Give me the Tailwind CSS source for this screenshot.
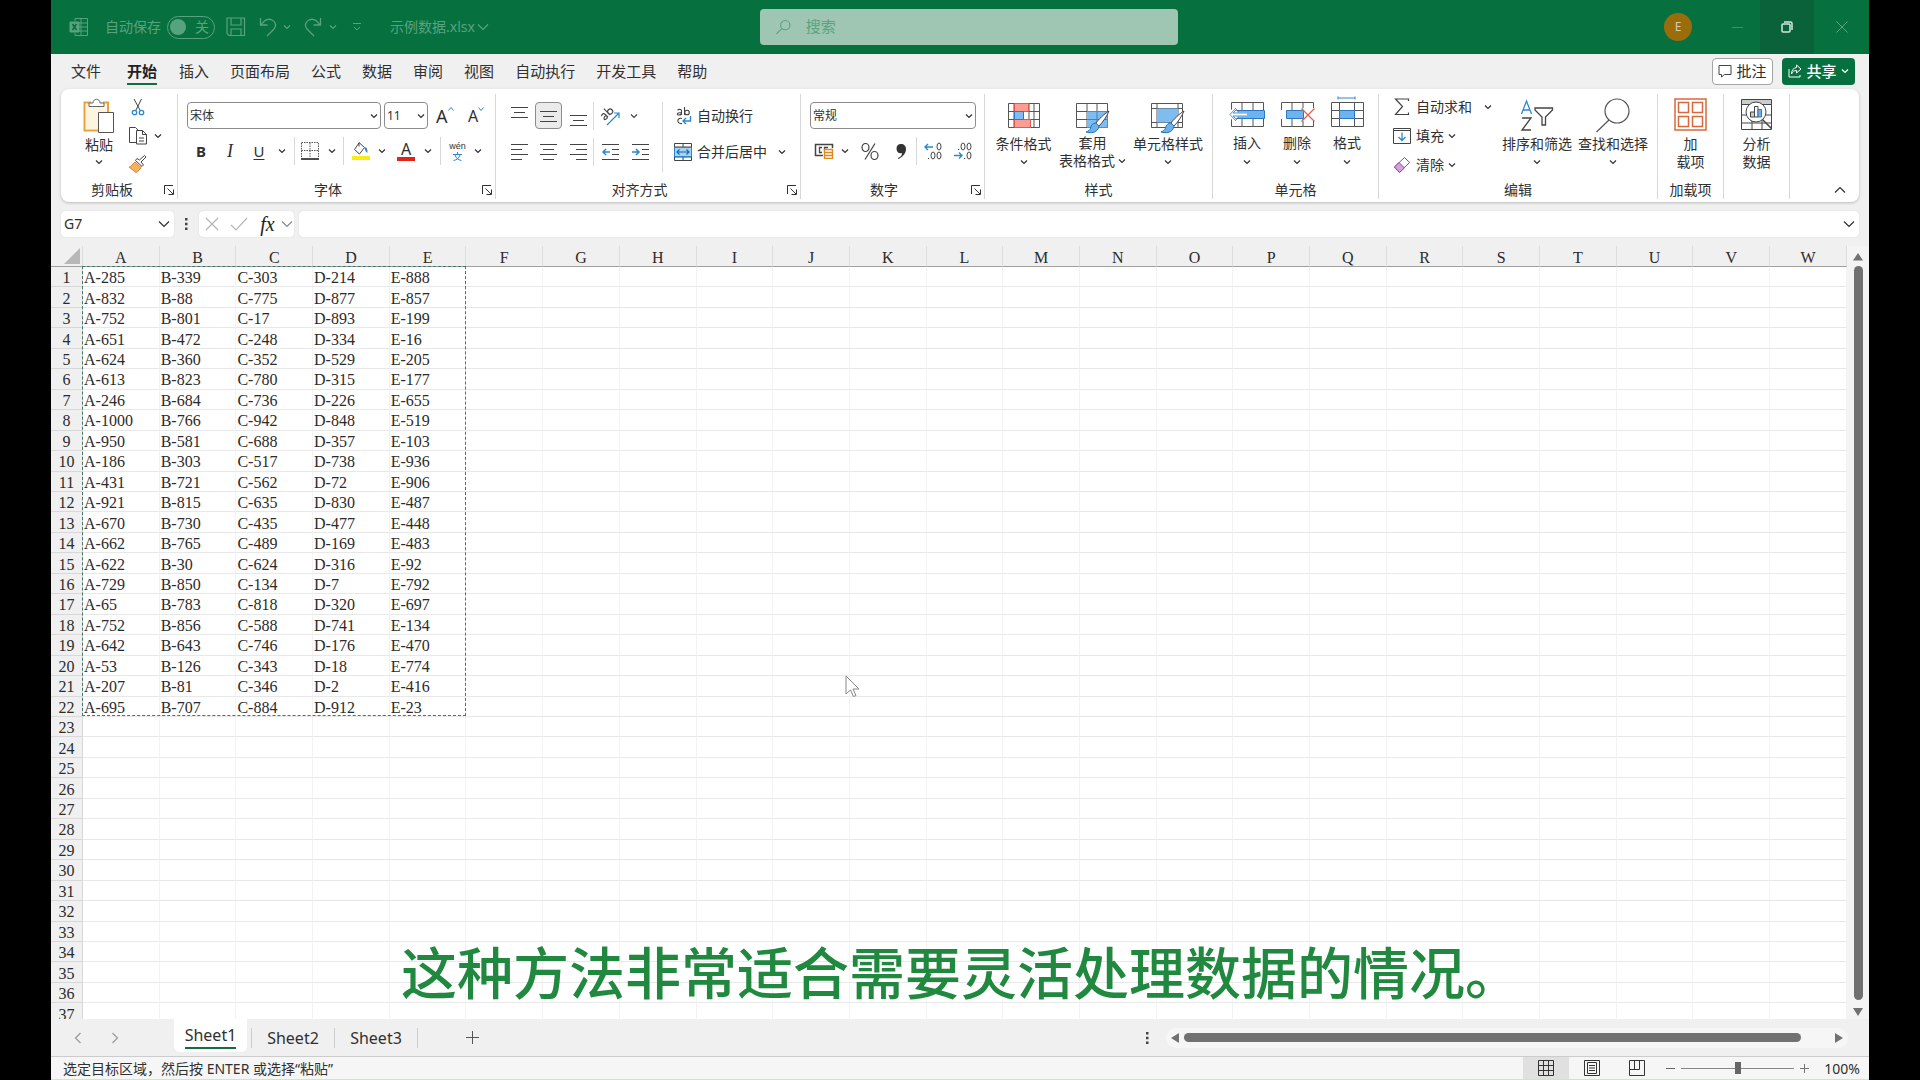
<!DOCTYPE html>
<html lang="zh-CN">
<head>
<meta charset="utf-8">
<title>示例数据.xlsx</title>
<script src="https://cdn.jsdelivr.net/npm/@tailwindcss/browser@4"></script>
</head>
<body class="h-screen overflow-hidden bg-black px-[51px] font-['Noto_Sans','Noto_Sans_CJK_SC',sans-serif] text-sm text-[#303030]">
<svg class="hidden">
  <symbol id="chev" viewBox="0 0 8 8"><path d="M1 2.500l3 3 3-3" fill="none" stroke="currentColor" stroke-width="1.200"/></symbol>
  <symbol id="chevl" viewBox="0 0 12 12"><path d="M1 3.500l5 5 5-5" fill="none" stroke="currentColor" stroke-width="1.200"/></symbol>
  <symbol id="launch" viewBox="0 0 10 10"><path d="M.5 9V.5H9M3.500 3.500l5.500 5.500M9.500 4.500v5h-5" fill="none" stroke="currentColor"/></symbol>
  <symbol id="brush" viewBox="0 0 26 24"><path d="M25 1C20 4 14 10 12 13l3 3C19 12 23 6 25 1z" fill="#fff" stroke="#444"/><path d="M12 13c-3 0-5 2-5.500 5-.5 2-2 3-4.500 4 5 1.500 12 1 13-6z" fill="#6fb1e6" stroke="#1f78c4"/></symbol>
</svg>
<div class="flex h-full flex-col bg-[#f0f0f0]">

  <!-- Title bar -->
  <header class="flex h-[54px] shrink-0 items-center bg-[#06703f] text-[#58a37f]">
    <div class="flex flex-1 items-center pl-[18px]">
      <svg class="size-5" viewBox="0 0 20 20" fill="none" stroke="currentColor"><path d="M6 4V1.500h12.500v17H6V16M12 1.500v17M6 6h12.500M6 10h12.500M6 14h12.500"/><path d="M1 5h9v10H1z" fill="currentColor"/><path d="M3.500 7l4 6M7.500 7l-4 6" stroke="#06703f" stroke-width="1.600"/></svg>
      <label for="autosave" class="ml-4 w-14 whitespace-nowrap">自动保存</label>
      <button id="autosave" role="switch" aria-checked="false" class="ml-[6px] flex h-[23px] w-12 items-center justify-between rounded-full border border-[#58a37f] pr-[5px] pl-[2px] text-sm leading-5"><span class="size-4 rounded-full bg-[#58a37f]"></span>关</button>
      <button aria-label="保存" class="ml-[11px]"><svg class="size-5" viewBox="0 0 20 20" fill="none" stroke="currentColor" stroke-width="1.200"><path d="M1 1h17.500v17.500H3L1 16.500zM5 1v7h10V1M5 18.500V12h10v6.500"/></svg></button>
      <button aria-label="撤消" class="ml-[13px]"><svg class="size-5" viewBox="0 0 20 20" fill="none" stroke="currentColor" stroke-width="1.300"><path d="M1.500 1v7h7M2 8c4-6 8-6.500 11-5 4 2 4.500 6 2 9l-7 7"/></svg></button>
      <svg class="ml-[4px] size-2"><use href="#chev"/></svg>
      <button aria-label="恢复" class="ml-3"><svg class="size-5" viewBox="0 0 20 20" fill="none" stroke="currentColor" stroke-width="1.300"><path d="M17.500 1v7h-7M17 8c-4-6-8-6.500-11-5-4 2-4.500 6-2 9l7 7"/></svg></button>
      <svg class="ml-[6px] size-2"><use href="#chev"/></svg>
      <svg class="ml-[15px] size-[10px]" viewBox="0 0 10 10" fill="none" stroke="currentColor"><path d="M1 1.500h8M2 5l3 3 3-3"/></svg>
      <button class="ml-7 flex items-center gap-[2px] whitespace-nowrap">示例数据.xlsx <svg class="size-3"><use href="#chevl"/></svg></button>
    </div>
    <label class="flex h-9 w-[418px] items-center rounded bg-[#9fc6b2] pl-4">
      <svg class="size-4" viewBox="0 0 16 16" fill="none" stroke="#58a37f" stroke-width="1.200"><circle cx="10" cy="6" r="5"/><path d="M6.500 9.500L.5 15.500"/></svg>
      <input type="text" aria-label="搜索" placeholder="搜索" class="ml-[15px] w-full bg-transparent text-[15px] outline-none placeholder:text-[#58a37f]">
    </label>
    <div class="flex h-full flex-1 items-center justify-end">
      <span class="mr-[22px] flex size-7 items-center justify-center rounded-full bg-[#9a6c0c] text-xs text-[#d8cba9]">E</span>
      <button aria-label="最小化" class="mr-[6px] flex h-full w-10 items-center justify-end"><span class="mr-[11px] h-px w-[11px] bg-[#3d9169]"></span></button>
      <button aria-label="还原" class="flex h-full w-[54px] items-center justify-center bg-[#0a623a] text-[#d5e8df]"><svg class="size-3" viewBox="0 0 12 12" fill="none" stroke="currentColor" stroke-width="1.500"><rect x="1" y="3" width="8" height="8" rx="1"/><path d="M3 1h6.500q1.500 0 1.500 1.500V9"/></svg></button>
      <button aria-label="关闭" class="flex h-full w-[55px] items-center justify-center"><svg class="size-3" viewBox="0 0 12 12" stroke="currentColor"><path d="M.5.5l11 11M11.500.5l-11 11"/></svg></button>
    </div>
  </header>

  <!-- Ribbon tabs -->
  <div class="flex h-[35px] shrink-0 items-center">
    <nav class="flex gap-[21px] pb-px pl-5 text-[15px] leading-[22px] whitespace-nowrap">
      <a href="#" class="mr-[5px]">文件</a>
      <a href="#" class="relative mr-px font-bold text-[#222] after:absolute after:inset-x-0 after:-bottom-[3px] after:h-[2px] after:bg-[#146c3f]">开始</a>
      <a href="#">插入</a><a href="#">页面布局</a><a href="#">公式</a><a href="#">数据</a><a href="#">审阅</a><a href="#">视图</a><a href="#">自动执行</a><a href="#">开发工具</a><a href="#">帮助</a>
    </nav>
    <div class="ml-auto flex gap-[9px] pr-[14px] text-[15px] leading-5">
      <button class="flex h-[27px] w-[61px] items-center justify-center gap-1 rounded border border-[#a5a5a5] bg-white pb-px whitespace-nowrap"><svg class="size-[14px] shrink-0" viewBox="0 0 14 14" fill="none" stroke="#444"><path d="M1 1.500h12v9H6.500L3.500 13v-2.500H1z"/></svg>批注</button>
      <button class="flex h-[27px] w-[73px] items-center justify-center gap-1 rounded bg-[#06703f] pb-px font-medium whitespace-nowrap text-white"><svg class="size-[14px] shrink-0" viewBox="0 0 14 14" fill="none" stroke="currentColor"><path d="M1 5v8h11v-2M8.500 1l4.500 4-4.500 4V6.500C6 6.500 4.500 7.500 3.500 10c0-4 2-6 5-6.500z"/></svg>共享<svg class="size-2 shrink-0"><use href="#chev"/></svg></button>
    </div>
  </div>

  <!-- Ribbon -->
  <div class="mx-[10px] flex h-[113px] shrink-0 rounded-lg bg-white pt-[5px] pb-[3px] leading-[18px] whitespace-nowrap shadow-[0_1px_3px_#bbb]">
    <section class="flex w-[117px] flex-col justify-between border-r border-[#d8d8d8]">
      <div class="flex pt-1 pl-[18px]">
        <button class="flex w-10 flex-col items-center">
          <svg class="h-9 w-8" viewBox="0 0 32 36" fill="none"><path d="M8 4.500H1.500v28H16M20 4.500h5V14" stroke="#e9a23b" stroke-width="2"/><path d="M3 6h20.500v8H16v17H3z" fill="#fff4e0"/><path d="M6 8.500V5h4c0-5 7-5 7 0h4v3.500z" fill="#fff" stroke="#666"/><path d="M15.500 14.500h15v20h-15z" fill="#fff" stroke="#555"/></svg>
          <span class="mt-[2px]">粘贴</span><svg class="mt-[4px] size-2"><use href="#chev"/></svg>
        </button>
        <div class="ml-[7px] grid grid-cols-[24px_16px] items-center gap-y-[10px] justify-items-center">
          <button aria-label="剪切" class="col-start-1"><svg class="h-[18px] w-[14px]" viewBox="0 0 14 18" fill="none"><path d="M3 1l6.500 12M10.500 1L4.500 13" stroke="#444"/><circle cx="3.500" cy="14.500" r="2.200" stroke="#2b88d0" stroke-width="1.300"/><circle cx="10.500" cy="14.500" r="2.200" stroke="#2b88d0" stroke-width="1.300"/></svg></button>
          <button aria-label="复制" class="col-start-1"><svg class="h-[19px] w-5" viewBox="0 0 20 19" fill="none" stroke="#444"><path d="M8 16.500H1.500V1.500h6l3 3"/><path d="M8.500 4.500h6l4 4v9.500h-10zM14.500 4.500v4h4M11 12h5M11 15h5"/></svg></button>
          <svg class="size-2"><use href="#chev"/></svg>
          <button aria-label="格式刷" class="col-start-1"><svg class="size-[18px]" viewBox="0 0 18 18" fill="none"><path d="M6 7L2 11c-1 1-1 1-2 1l7 5.500c2-1 4-3 5-5z" fill="#f5b062" stroke="#d9822b"/><path d="M6.500 5.500l6.500 6 1.500-1.500-2.500-3 5-5-1.500-1.500-5 4.500-2.500-1.500z" fill="#fff" stroke="#444"/></svg></button>
        </div>
      </div>
      <div class="flex items-center"><h2 class="flex-1 pr-[13px] text-center">剪贴板</h2><svg class="mr-[3px] -ml-3 size-[10px]"><use href="#launch"/></svg></div>
    </section>

    <section class="flex w-[318px] flex-col justify-between border-r border-[#d8d8d8]">
      <div class="pt-2 pl-[9px]">
        <div class="flex items-center">
          <div class="relative w-[194px]"><select aria-label="字体" class="h-[27px] w-full appearance-none rounded border border-[#8c8c8c] bg-white pl-[2px] text-xs"><option>宋体</option></select><svg class="pointer-events-none absolute top-[10px] right-[3px] size-2"><use href="#chev"/></svg></div>
          <div class="relative ml-[3px] w-11"><select aria-label="字号" class="h-[27px] w-full appearance-none rounded border border-[#8c8c8c] bg-white pl-[2px] text-xs"><option>11</option></select><svg class="pointer-events-none absolute top-[10px] right-[3px] size-2"><use href="#chev"/></svg></div>
          <button aria-label="增大字号" class="ml-2 flex w-5 text-lg leading-5">A<svg class="size-[6px] shrink-0" viewBox="0 0 6 6"><path d="M.5 4.500l2.500-3 2.500 3" fill="none" stroke="#2b88d0"/></svg></button>
          <button aria-label="减小字号" class="ml-3 flex w-5 text-base leading-5">A<svg class="size-[6px] shrink-0" viewBox="0 0 6 6"><path d="M.5 1.500l2.500 3 2.500-3" fill="none" stroke="#2b88d0"/></svg></button>
        </div>
        <div class="mt-2 flex h-7 items-center text-base">
          <button class="w-7 text-[15px] font-bold">B</button><button class="w-[30px] font-['Liberation_Serif',serif] text-lg italic">I</button><button class="w-7 text-[15px] underline underline-offset-2">U</button>
          <svg class="mx-[5px] size-2 shrink-0"><use href="#chev"/></svg>
          <span class="ml-[3px] h-7 w-px bg-[#d8d8d8]"></span>
          <button aria-label="边框" class="ml-[6px]"><svg class="size-[18px]" viewBox="0 0 18 18" fill="none" stroke="#555"><path d="M.5 1v15M17.500 1v15M9 1v15M.5.5h17M.5 8.500h17" stroke-dasharray="1.500 1"/><path d="M0 17h18" stroke="#111" stroke-width="1.500"/></svg></button>
          <svg class="ml-[9px] size-2 shrink-0"><use href="#chev"/></svg>
          <span class="ml-[7px] h-7 w-px bg-[#d8d8d8]"></span>
          <button aria-label="填充颜色" class="ml-[7px]"><svg class="size-5" viewBox="0 0 20 20" fill="none"><path d="M8 2L3.500 8.500l5 4.500 5-6.500L8 1.500v4" stroke="#444"/><path d="M13 6c3 0 3.500 2 3.500 6-2-1-2.500-3-3-6z" fill="#2b88d0"/><path d="M1 15h18v4H1z" fill="#f7ec13"/></svg></button>
          <svg class="ml-[7px] size-2 shrink-0"><use href="#chev"/></svg>
          <button aria-label="字体颜色" class="ml-[11px] flex w-[18px] flex-col items-center leading-4">A<span class="h-1 w-[18px] bg-[#e1251b]"></span></button>
          <svg class="ml-[9px] size-2 shrink-0"><use href="#chev"/></svg>
          <span class="ml-2 h-7 w-px bg-[#d8d8d8]"></span>
          <button aria-label="拼音" class="ml-2 flex w-[17px] flex-col items-center font-['Liberation_Sans','Noto_Sans_CJK_SC',sans-serif] text-[9px] leading-[10px]">wén<svg class="mt-px size-[9px]" viewBox="0 0 9 9" fill="none" stroke="#2b88d0"><path d="M4.500 0v2M0 2.500h9M2 3c1 3 3 5 6.500 5.500M7 3C6 6 4 8 .5 8.500"/></svg></button>
          <svg class="ml-2 size-2 shrink-0"><use href="#chev"/></svg>
        </div>
      </div>
      <div class="flex items-center"><h2 class="flex-1 pr-4 text-center">字体</h2><svg class="mr-[3px] -ml-3 size-[10px]"><use href="#launch"/></svg></div>
    </section>

    <section class="flex w-[305px] flex-col justify-between border-r border-[#d8d8d8]">
      <div class="flex pt-2">
        <div class="grid grid-cols-[29px_29px_30px_1px_32px_28px] grid-rows-[27px_27px] items-center justify-items-center gap-y-[9px] pl-[9px] text-[#444]">
          <button aria-label="顶端对齐" class="-mt-2"><svg class="h-3 w-[17px]" viewBox="0 0 17 12" stroke="currentColor"><path d="M0 1.500h17M3 6.500h11M0 11.500h17"/></svg></button>
          <button aria-label="垂直居中" class="flex size-[27px] items-center justify-center rounded border border-[#8c8c8c] bg-[#ebebeb]"><svg class="h-3 w-[17px]" viewBox="0 0 17 12" stroke="currentColor"><path d="M0 1.500h17M3 6.500h11M0 11.500h17"/></svg></button>
          <button aria-label="底端对齐" class="mt-2"><svg class="h-3 w-[17px]" viewBox="0 0 17 12" stroke="currentColor"><path d="M0 1.500h17M3 6.500h11M0 11.500h17"/></svg></button>
          <span class="h-7 w-px bg-[#d8d8d8]"></span>
          <button aria-label="方向"><svg class="size-5" viewBox="0 0 20 20" fill="none"><g transform="rotate(-45 7 8)" stroke="#444" stroke-width="1.100"><path d="M1.500 5.500c3-1.500 4 0 4 1.500v4M5.500 8c-5 0-5 3-2.500 3 1.500 0 2.500-1 2.500-2M8.500 2v9"/><circle cx="11" cy="8.500" r="2.500"/></g><path d="M7 19L19 7M14 7h5v5" stroke="#2b88d0" stroke-width="1.200"/></svg></button>
          <svg class="mr-3 size-2"><use href="#chev"/></svg>
          <button aria-label="左对齐"><svg class="h-4 w-[17px]" viewBox="0 0 17 16" stroke="currentColor"><path d="M0 .5h17M0 5.500h11M0 10.500h17M0 15.500h11"/></svg></button>
          <button aria-label="居中"><svg class="h-4 w-[17px]" viewBox="0 0 17 16" stroke="currentColor"><path d="M0 .5h17M3 5.500h11M0 10.500h17M3 15.500h11"/></svg></button>
          <button aria-label="右对齐"><svg class="h-4 w-[17px]" viewBox="0 0 17 16" stroke="currentColor"><path d="M0 .5h17M6 5.500h11M0 10.500h17M6 15.500h11"/></svg></button>
          <span class="h-7 w-px bg-[#d8d8d8]"></span>
          <button aria-label="减少缩进量"><svg class="h-4 w-[17px]" viewBox="0 0 17 16" fill="none" stroke="currentColor"><path d="M0 .5h17M10 5.500h7M10 10.500h7M0 15.500h17"/><path d="M8 8H1M4 5L1 8l3 3" stroke="#2b88d0" stroke-width="1.500"/></svg></button>
          <button aria-label="增加缩进量"><svg class="h-4 w-[17px]" viewBox="0 0 17 16" fill="none" stroke="currentColor"><path d="M0 .5h17M10 5.500h7M10 10.500h7M0 15.500h17"/><path d="M0 8h7M4 5l3 3-3 3" stroke="#2b88d0" stroke-width="1.500"/></svg></button>
        </div>
        <span class="ml-2 h-[70px] w-px bg-[#d8d8d8]"></span>
        <div class="ml-[11px] flex flex-col gap-[9px]">
          <button class="flex h-[27px] items-center gap-[5px]"><svg class="h-5 w-[18px]" viewBox="0 0 18 20" fill="none"><g stroke="#444" stroke-width="1.100"><path d="M3.500 4c3-1.500 4 0 4 1.200V9M7.500 6.500c-5 0-5 2.500-2.500 2.500 1.500 0 2.500-1 2.500-2M10.500 1v8M8 12.500c-5.500-1.500-5.500 6 0 5"/><circle cx="13" cy="6.500" r="2.300"/></g><path d="M16.500 10v5H9M12 12l-3 3 3 3" stroke="#2b88d0" stroke-width="1.400"/></svg>自动换行</button>
          <button class="flex h-[27px] items-center gap-[5px]"><svg class="size-[18px]" viewBox="0 0 18 18" fill="none"><path d="M.5.5h17v17H.5zM9 .5v17M.5 4h17M.5 14h17" stroke="#444"/><path d="M.5 4.500h17v9H.5z" fill="#a9d3f2" stroke="#2b88d0"/><path d="M3 9h12M5.500 6.500L3 9l2.500 2.500M12.500 6.500L15 9l-2.500 2.500" stroke="#1668ad" stroke-width="1.200"/></svg>合并后居中<svg class="ml-[6px] size-2"><use href="#chev"/></svg></button>
        </div>
      </div>
      <div class="flex items-center"><h2 class="flex-1 pr-4 text-center">对齐方式</h2><svg class="mr-[3px] -ml-3 size-[10px]"><use href="#launch"/></svg></div>
    </section>

    <section class="flex w-[184px] flex-col justify-between border-r border-[#d8d8d8]">
      <div class="pt-2 pl-[9px]">
        <div class="relative w-[166px]"><select aria-label="数字格式" class="h-[27px] w-full appearance-none rounded border border-[#8c8c8c] bg-white pl-[2px] text-xs"><option>常规</option></select><svg class="pointer-events-none absolute top-[10px] right-[3px] size-2"><use href="#chev"/></svg></div>
        <div class="mt-2 flex h-7 items-center">
          <button aria-label="会计数字格式" class="ml-1"><svg class="h-4 w-5" viewBox="0 0 20 16" fill="none"><path d="M9 12.500H1.500v-11h17V5" stroke="#444" stroke-width="1.500"/><path d="M8 4.500H5.500v5H8M14 4.500h-3.500v3" stroke="#444" stroke-width="1.300"/><path d="M10.500 6.500h8v9h-8zM10.500 9.500h8M10.500 12.500h8" fill="#fff" stroke="#e08a1e" stroke-width="1.400"/></svg></button>
          <svg class="ml-[7px] size-2"><use href="#chev"/></svg>
          <button aria-label="百分比样式" class="ml-3 w-5"><svg class="h-[17px] w-[18px]" viewBox="0 0 18 17" fill="none" stroke="#444" stroke-width="1.200"><ellipse cx="4.500" cy="4.500" rx="3.500" ry="4"/><ellipse cx="13.500" cy="12.500" rx="3.500" ry="4"/><path d="M14 .5L4 16.500"/></svg></button>
          <button aria-label="千位分隔样式" class="ml-[15px]"><svg class="h-[15px] w-[10px]" viewBox="0 0 10 15"><path d="M5 0c3 0 5 2 5 5 0 4-3 8-8 10v-1c3-1 4-3 4-5C3 10 .5 8 .5 4.500.5 2 2 0 5 0z" fill="#333"/></svg></button>
          <span class="ml-[10px] h-7 w-px bg-[#d8d8d8]"></span>
          <button aria-label="增加小数位数" class="ml-[7px]"><svg class="h-[18px] w-[18px]" viewBox="0 0 18 18" fill="none"><path d="M9 5H1M4 2L1 5l3 3" stroke="#2b88d0" stroke-width="1.400"/><g stroke="#444"><ellipse cx="15" cy="4.500" rx="2" ry="3.500"/><ellipse cx="15" cy="13.500" rx="2" ry="3.500"/><ellipse cx="9" cy="13.500" rx="2" ry="3.500"/><path d="M4 16.500h1.200"/></g></svg></button>
          <button aria-label="减少小数位数" class="ml-3"><svg class="h-[18px] w-[18px]" viewBox="0 0 18 18" fill="none"><path d="M0 13.500h8M5 10.500l3 3-3 3" stroke="#2b88d0" stroke-width="1.400"/><g stroke="#444"><ellipse cx="15" cy="4.500" rx="2" ry="3.500"/><ellipse cx="9" cy="4.500" rx="2" ry="3.500"/><ellipse cx="15" cy="13.500" rx="2" ry="3.500"/><path d="M4 7.500h1.200M10 16.500h1.200"/></g></svg></button>
        </div>
      </div>
      <div class="flex items-center"><h2 class="flex-1 pr-4 text-center">数字</h2><svg class="mr-[3px] -ml-3 size-[10px]"><use href="#launch"/></svg></div>
    </section>

    <section class="flex w-[228px] flex-col justify-between border-r border-[#d8d8d8]">
      <div class="flex pt-2">
        <button class="flex w-[77px] flex-col items-center"><svg class="h-7 w-[34px]" viewBox="0 0 34 28" fill="none"><path d="M1.500 1.500h31v24h-31zM7 1.500v24M27 1.500v24M22 1.500v24M1.500 9.500h31M1.500 17.500h31" stroke="#555"/><path d="M7.500 1.500h14v8h-14zM7.500 17.500h16v8h-16z" fill="#ff9c94" stroke="#e0584f"/><path d="M7.500 9.500h9v8h-9z" fill="#7fbdf0" stroke="#2b78c4"/></svg><span class="mt-[5px]">条件格式</span><svg class="mt-[5px] size-2"><use href="#chev"/></svg></button>
        <button class="-ml-[3px] flex w-[67px] flex-col items-center"><svg class="h-8 w-9" viewBox="0 0 36 32" fill="none"><path d="M1.500 1.500h31v24h-31zM12 1.500v24M22 1.500v24M1.500 9.500h31M1.500 17.500h31" stroke="#555"/><path d="M12 9.500h20.500v16H12z" fill="#7fbdf0"/><path d="M12 17.500h20M22 9.500v16" stroke="#3b83c6"/><use href="#brush" x="9" y="8" width="26" height="24"/></svg><span>套用</span><span class="flex items-center gap-[3px]">表格格式<svg class="size-2"><use href="#chev"/></svg></span></button>
        <button class="ml-[3px] flex w-[78px] flex-col items-center"><svg class="h-8 w-9" viewBox="0 0 36 32" fill="none"><path d="M1.500 1.500h31v24h-31zM7 1.500v24M28 1.500v24M1.500 6.500h31M1.500 20.500h31" stroke="#555"/><path d="M7 6.500h21v14H7z" fill="#7fbdf0"/><use href="#brush" x="9" y="8" width="26" height="24"/></svg><span class="mt-px">单元格样式</span><svg class="mt-[5px] size-2"><use href="#chev"/></svg></button>
      </div>
      <h2 class="text-center">样式</h2>
    </section>

    <section class="flex w-[166px] flex-col justify-between border-r border-[#d8d8d8]">
      <div class="flex pt-[2px] pl-[9px]">
        <button class="flex w-[50px] flex-col items-center"><svg class="h-8 w-9" viewBox="0 0 36 32" fill="none"><path d="M2.500 6.500h32v24h-32zM13 6.500v24M24 6.500v24M2.500 14.500h32M2.500 22.500h32" stroke="#555"/><path d="M9 14.500h26.500v8H9z" fill="#6fb3ec" stroke="#2b78c4"/><path d="M18 18.500H1M7 12l-6.500 6.500L7 25" stroke="#fff" stroke-width="4"/><path d="M18 17H4l4-4M18 20H4l4 4M7 12l-6 6.500L7 25" stroke="#3c96dc"/></svg><span class="mt-[6px]">插入</span><svg class="mt-[6px] size-2"><use href="#chev"/></svg></button>
        <button class="flex w-[50px] flex-col items-center"><svg class="h-8 w-9" viewBox="0 0 36 32" fill="none"><path d="M2.500 6.500h32v24h-32zM13 6.500v24M24 6.500v24M2.500 14.500h32M2.500 22.500h32" stroke="#555"/><path d="M0 14h8v9H0zM24 12h12v13H24z" fill="#fff"/><path d="M7.500 14.500h17v8h-17z" fill="#6fb3ec" stroke="#2b78c4"/><path d="M22.500 12.500l13 13M35.500 12.500l-13 13" stroke="#e8604c" stroke-width="1.300"/></svg><span class="mt-[6px]">删除</span><svg class="mt-[6px] size-2"><use href="#chev"/></svg></button>
        <button class="flex w-[50px] flex-col items-center"><svg class="h-8 w-9" viewBox="0 0 36 32" fill="none"><path d="M2.500 6.500h32v24h-32zM10.500 6.500v24M25.500 6.500v24M2.500 14.500h32M2.500 22.500h32" stroke="#555"/><path d="M10.500 14.500h15v8h-15z" fill="#6fb3ec" stroke="#2b78c4"/><path d="M9 2h17M9 .5v3M26 .5v3" stroke="#2b88d0"/></svg><span class="mt-[6px]">格式</span><svg class="mt-[6px] size-2"><use href="#chev"/></svg></button>
      </div>
      <h2 class="text-center">单元格</h2>
    </section>

    <section class="flex w-[279px] flex-col justify-between border-r border-[#d8d8d8]">
      <div class="flex pt-px pl-[13px]">
        <div class="flex w-[107px] flex-col gap-[5px]">
          <button class="flex h-6 items-center gap-1"><svg class="size-5" viewBox="0 0 20 20" fill="none" stroke="#444" stroke-width="1.200"><path d="M16.500 4V2h-13l7 7.500-7 8h13v-2"/></svg>自动求和<svg class="ml-2 size-2"><use href="#chev"/></svg></button>
          <button class="flex h-6 items-center gap-1"><svg class="size-5" viewBox="0 0 20 20" fill="none" stroke="#444"><path d="M1.500 2.500h17v15h-17zM1.500 4.500h17"/><path d="M10 6.500v8M6.500 11l3.500 3.500 3.500-3.500" stroke="#2b88d0" stroke-width="1.300"/></svg>填充<svg class="size-2"><use href="#chev"/></svg></button>
          <button class="flex h-6 items-center gap-1"><svg class="size-5" viewBox="0 0 20 20" fill="#fff" stroke="#8a4a9e"><path d="M12.500 2.500l5 5-10 10-5-5.500z"/><path d="M7 7.500l5.500 5.500-5 4.500-5-5.500z" fill="#d9a0dc"/></svg>清除<svg class="size-2"><use href="#chev"/></svg></button>
        </div>
        <button class="flex w-[76px] flex-col items-center pt-[3px]"><svg class="h-9 w-[34px]" viewBox="0 0 34 36" fill="none" stroke-width="1.300"><path d="M1.500 16L6.500 3l5 13M3.500 12h6" stroke="#2b88d0"/><path d="M2 20h9L2 32h9" stroke="#444"/><path d="M15 10h17.500v2l-7 7v8h-3.500v-8l-7-7z" stroke="#444"/></svg><span class="mt-[1px]">排序和筛选</span><svg class="mt-[5px] size-2"><use href="#chev"/></svg></button>
        <button class="flex w-[76px] flex-col items-center pt-[3px]"><svg class="h-9 w-[34px]" viewBox="0 0 34 36" fill="none" stroke="#555" stroke-width="1.200"><circle cx="21" cy="13" r="12"/><path d="M13 22L.5 34"/></svg><span class="mt-[1px]">查找和选择</span><svg class="mt-[5px] size-2"><use href="#chev"/></svg></button>
      </div>
      <h2 class="text-center">编辑</h2>
    </section>

    <section class="flex w-[66px] flex-col items-center justify-between border-r border-[#d8d8d8]">
      <button class="flex flex-col items-center pt-1"><svg class="h-[33px] w-[33px]" viewBox="0 0 33 33" fill="none" stroke="#d9683c" stroke-width="1.500"><path d="M1 1h31v31H1zM4.500 4.500h10v10h-10zM18.500 4.500h10v10h-10zM4.500 18.500h10v10h-10zM18.500 18.500h10v10h-10z"/></svg><span class="mt-1">加<br>载项</span></button>
      <h2>加载项</h2>
    </section>
    <section class="flex w-[66px] flex-col items-center border-r border-[#d8d8d8]">
      <button class="flex flex-col items-center pt-1"><svg class="h-[33px] w-[33px]" viewBox="0 0 33 33" fill="none" stroke="#444"><path d="M1.500 1.500h30v30h-30z"/><path d="M2 2h29v4H2z" fill="#ccc" stroke="none"/><path d="M1.500 6.500h30M1.500 17h30M1.500 25h30M12 6v26M22 6v26"/><circle cx="16" cy="14" r="10" fill="#fff"/><path d="M22.500 21.500l9 9" stroke-width="1.500"/><path d="M10.500 14h4v5h-4z" fill="#ccc"/><path d="M14.500 8.500h3.500V19h-3.500z" fill="#fff"/><path d="M18 11.500h3.500V19H18z" fill="#6fb3ec" stroke="#2b78c4"/></svg><span class="mt-1">分析<br>数据</span></button>
    </section>
    <button aria-label="折叠功能区" class="mt-auto mr-[13px] mb-[3px] ml-auto"><svg class="size-3 rotate-180"><use href="#chevl"/></svg></button>
  </div>

  <!-- Formula bar -->
  <div class="flex h-[44px] shrink-0 items-center px-[10px]">
    <label class="flex h-[26px] w-[113px] items-center rounded bg-white pr-1 pl-[3px] shadow-[0_0_1px_#bbb]"><input aria-label="名称框" value="G7" class="w-full min-w-0 text-sm outline-none"><svg class="size-3 shrink-0"><use href="#chevl"/></svg></label>
    <svg class="mx-[11px] h-3 w-[3px]" viewBox="0 0 3 12" fill="#444"><path d="M0 0h2.500v2.500H0zM0 4.750h2.500v2.500H0zM0 9.500h2.500V12H0z"/></svg>
    <div class="flex h-[26px] w-[95px] items-center rounded bg-white pl-[6px] text-[#b5b5b5] shadow-[0_0_1px_#bbb]">
      <button aria-label="取消"><svg class="size-[14px]" viewBox="0 0 14 14" stroke="currentColor" stroke-width="1.200"><path d="M1 1l12 12M13 1L1 13"/></svg></button>
      <button aria-label="输入" class="ml-[11px]"><svg class="h-[14px] w-[18px]" viewBox="0 0 18 14" fill="none" stroke="currentColor" stroke-width="1.200"><path d="M1 8l5 5L17 1"/></svg></button>
      <button aria-label="插入函数" class="ml-[11px] w-[17px] font-['Liberation_Serif',serif] text-xl leading-5 text-[#222] italic">fx</button>
      <svg class="ml-[5px] size-3 text-[#888]"><use href="#chevl"/></svg>
    </div>
    <label class="ml-[5px] flex h-[26px] flex-1 items-center rounded bg-white pr-1 shadow-[0_0_1px_#bbb]"><input aria-label="编辑栏" class="flex-1 px-2 outline-none"><svg class="size-3"><use href="#chevl"/></svg></label>
  </div>

  <!-- Worksheet -->
  <main class="relative flex min-h-0 flex-1 overflow-hidden">
    <div class="relative flex-1 overflow-hidden">
      <table class="h-[778px] w-full table-fixed border-separate border-spacing-0 bg-white font-['Liberation_Serif',serif] text-base leading-4 text-[#2b2b2b]">
        <thead><tr id="cols" class="h-[21px] bg-[#f0f0f0]"><th aria-label="全选" class="w-8 border-r border-b border-[#ddd] border-b-[#a0a0a0] p-0"><svg class="ml-[13px] size-4" viewBox="0 0 16 16"><path d="M16 0v16H0z" fill="#b8b8b8"/></svg></th></tr></thead>
        <tbody id="rows"></tbody>
      </table>
      <div class="pointer-events-none absolute top-[20px] left-[31px] h-[450px] w-[calc((100%-32px)*5/23+1px)] border border-dashed border-[#44776a]"></div>
    </div>
    <div class="flex w-[22px] flex-col items-center bg-[#f4f4f4] pt-[7px] pb-[3px]">
      <svg class="h-2 w-[10px]" viewBox="0 0 10 8"><path d="M5 0l5 7.500H0z" fill="#717171"/></svg>
      <div class="mt-[5px] mb-[6px] w-[9px] flex-1 rounded-full bg-[#717171]"></div>
      <svg class="mt-[2px] h-2 w-[10px]" viewBox="0 0 10 8"><path d="M0 0h10L5 8z" fill="#717171"/></svg>
    </div>
    <svg class="absolute top-[429px] left-[794px] h-[23px] w-4" viewBox="0 0 16 23" fill="#fff" stroke="#888"><path d="M1 1v18l4.500-4 3 6.500 2.500-1-3-6.500h6z"/></svg>
    <p class="absolute inset-x-0 bottom-[6px] pl-[2px] text-center text-[56px] leading-[82px] font-medium whitespace-nowrap text-[#20893f]">这种方法非常适合需要灵活处理数据的情况。</p>
  </main>

  <!-- Sheet tabs -->
  <div class="flex h-[37px] shrink-0 items-center text-base leading-[22px]">
    <button aria-label="上一张" class="ml-[21px] text-[#999]"><svg class="size-3 rotate-90"><use href="#chevl"/></svg></button>
    <button aria-label="下一张" class="ml-[25px] text-[#999]"><svg class="size-3 -rotate-90"><use href="#chevl"/></svg></button>
    <button class="ml-[53px] flex h-[33px] w-[73px] items-center justify-center self-start rounded-b-md bg-white"><span class="border-b-2 border-[#146c3f] leading-6">Sheet1</span></button>
    <span class="ml-1 h-5 w-px bg-[#ccc]"></span>
    <button class="w-[82px]">Sheet2</button><span class="h-5 w-px bg-[#ccc]"></span>
    <button class="w-[82px]">Sheet3</button><span class="h-5 w-px bg-[#ccc]"></span>
    <button aria-label="新工作表" class="ml-12"><svg class="size-[13px]" viewBox="0 0 13 13" stroke="#555"><path d="M6.500 0v13M0 6.500h13"/></svg></button>
    <svg class="ml-auto h-3 w-[3px]" viewBox="0 0 3 12" fill="#444"><path d="M0 0h2.500v2.500H0zM0 4.750h2.500v2.500H0zM0 9.500h2.500V12H0z"/></svg>
    <div class="mr-[21px] ml-[17px] flex h-5 w-[682px] items-center rounded-full bg-[#f6f6f6] px-[5px]">
      <svg class="h-[10px] w-2" viewBox="0 0 8 10"><path d="M8 0v10L0 5z" fill="#717171"/></svg>
      <div class="mr-[34px] ml-[5px] h-[9px] flex-1 rounded-full bg-[#717171]"></div>
      <svg class="h-[10px] w-2" viewBox="0 0 8 10"><path d="M0 0v10l8-5z" fill="#717171"/></svg>
    </div>
  </div>

  <!-- Status bar -->
  <footer class="flex h-6 shrink-0 items-center border-t border-[#ccc] border-b border-b-[#b9f5b0] bg-[#f6f6f6] leading-5 whitespace-nowrap">
    <span class="pt-px pl-3">选定目标区域，然后按 ENTER 或选择“粘贴”</span>
    <button aria-label="普通" class="ml-auto flex h-full w-[46px] items-center justify-center bg-[#e0e0e0]"><svg class="size-4" viewBox="0 0 16 16" fill="none" stroke="#333"><path d="M.5.5h15v15H.5zM5.500.5v15M10.500.5v15M.5 5.500h15M.5 10.500h15"/></svg></button>
    <button aria-label="页面布局" class="flex w-[46px] justify-center"><svg class="size-4" viewBox="0 0 16 16" fill="none" stroke="#333"><path d="M.5.5h15v15H.5zM3.500 2.500h9v11h-9zM5 5.500h6M5 8h6M5 10.500h6"/></svg></button>
    <button aria-label="分页预览" class="flex w-[44px] justify-center"><svg class="size-4" viewBox="0 0 16 16" fill="none" stroke="#333"><path d="M.5.5h15v15H.5zM.5 9.500h10v-9M5.500.5v9"/></svg></button>
    <button aria-label="缩小" class="ml-[7px] h-px w-[9px] bg-[#666]"></button>
    <input type="range" aria-label="缩放" class="mx-[6px] h-3 w-[113px] appearance-none bg-[linear-gradient(#888,#888)] bg-[length:100%_1px] bg-center bg-no-repeat [&::-webkit-slider-thumb]:h-3 [&::-webkit-slider-thumb]:w-[6px] [&::-webkit-slider-thumb]:appearance-none [&::-webkit-slider-thumb]:bg-[#666]">
    <button aria-label="放大"><svg class="size-[9px]" viewBox="0 0 9 9" stroke="#777"><path d="M4.500 0v9M0 4.500h9"/></svg></button>
    <span class="w-[60px] pt-px pr-[9px] text-right">100%</span>
  </footer>
</div>
<script>
const data = `285 339 303 214 888
832 88 775 877 857
752 801 17 893 199
651 472 248 334 16
624 360 352 529 205
613 823 780 315 177
246 684 736 226 655
1000 766 942 848 519
950 581 688 357 103
186 303 517 738 936
431 721 562 72 906
921 815 635 830 487
670 730 435 477 448
662 765 489 169 483
622 30 624 316 92
729 850 134 7 792
65 783 818 320 697
752 856 588 741 134
642 643 746 176 470
53 126 343 18 774
207 81 346 2 416
695 707 884 912 23`.split('\n').map(r => r.split(' '));
const letters = [...'ABCDEFGHIJKLMNOPQRSTUVW'];
document.getElementById('cols').insertAdjacentHTML('beforeend', letters.map(l =>
  `<th scope="col" class="border-r border-b border-[#ddd] border-b-[#a0a0a0] p-0 pt-[3px] font-normal">${l}</th>`).join(''));
document.getElementById('rows').innerHTML = Array.from({length: 37}, (_, r) =>
  `<tr class="h-5"><th scope="row" class="border-r border-b border-[#d8d8d8] bg-[#f0f0f0] p-0 pt-[3px] font-normal">${r + 1}</th>` +
  letters.map((l, c) => `<td class="border-r border-b border-[#f3f3f3] border-b-[#e8e8e8] p-0 pt-[3px] pl-px">${data[r] && c < 5 ? l + '-' + data[r][c] : ''}</td>`).join('') + '</tr>').join('');
</script>
</body>
</html>
